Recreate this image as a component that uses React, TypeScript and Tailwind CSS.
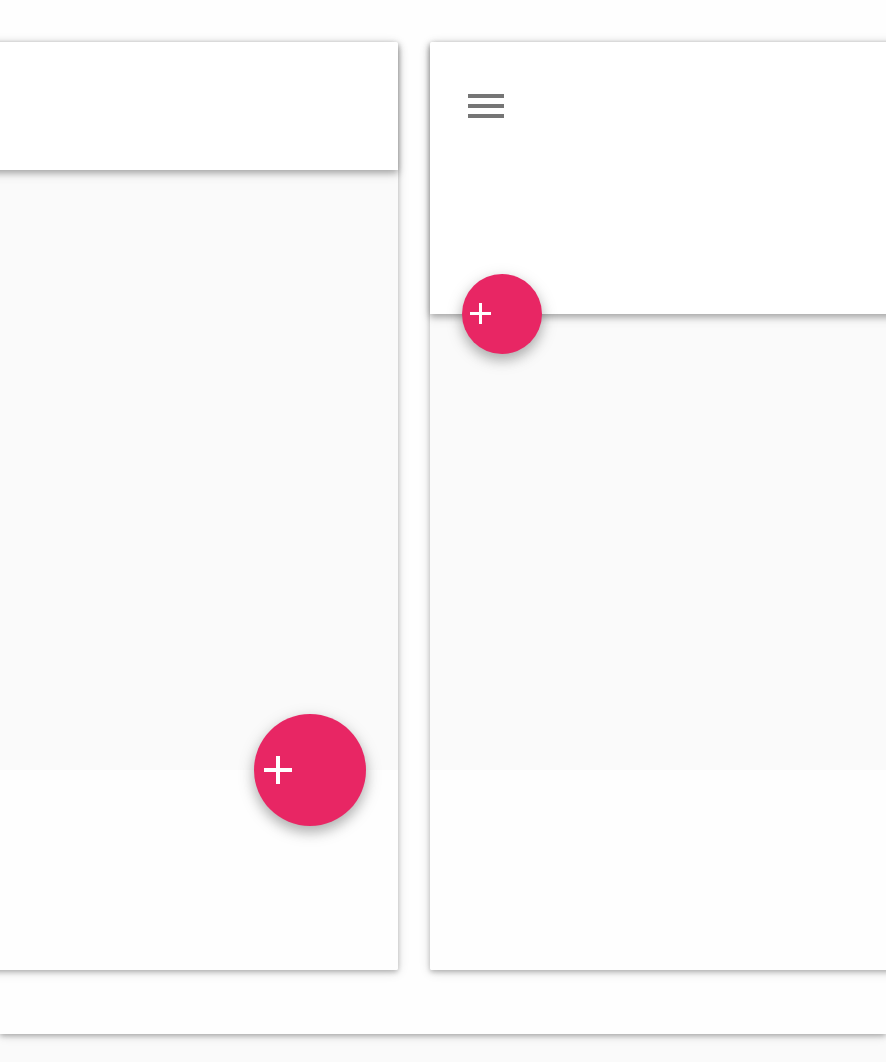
import React from "react";

function Plus({ size, stroke }: { size: number; stroke: number }) {
  return (
    <svg width={size} height={size} viewBox={`0 0 ${size} ${size}`}>
      <rect x={0} y={(size - stroke) / 2} width={size} height={stroke} fill="#ffffff" />
      <rect x={(size - stroke) / 2} y={0} width={stroke} height={size} fill="#ffffff" />
    </svg>
  );
}

export default function App() {
  return (
    <div className="min-h-[1062px] w-full bg-[#fafafa] font-['Roboto',sans-serif]">
      <div className="relative h-[1034px] w-full overflow-hidden bg-[#fefefe] shadow-[0_2px_5px_0_rgba(0,0,0,0.26),0_2px_10px_0_rgba(0,0,0,0.12)]">
        <div className="flex gap-[32px] pt-[42px] ml-[-42px]">
          {/* Left card */}
          <div className="relative flex h-[928px] w-[440px] shrink-0 flex-col rounded-[2px] bg-[#fefefe] shadow-[0_2px_5px_0_rgba(0,0,0,0.24),0_2px_12px_0_rgba(0,0,0,0.14)]">
            <div className="relative z-10 h-[128px] rounded-t-[2px] bg-white shadow-[0_3px_6px_0_rgba(0,0,0,0.26),0_4px_12px_0_rgba(0,0,0,0.12)]" />
            <div className="h-[600px] bg-[#fafafa]" />
            <div className="h-[200px] rounded-b-[2px] bg-[#fefefe]" />
            <button className="absolute bottom-[144px] right-[32px] z-20 flex h-[112px] w-[112px] items-center rounded-full bg-[#e82664] pl-[10px] shadow-[0_6px_12px_0_rgba(0,0,0,0.2),0_5px_18px_0_rgba(0,0,0,0.16)]">
              <Plus size={28} stroke={4} />
            </button>
          </div>
          {/* Right card */}
          <div className="relative flex h-[928px] w-[480px] shrink-0 flex-col rounded-[2px] bg-[#fefefe] shadow-[0_2px_5px_0_rgba(0,0,0,0.24),0_2px_12px_0_rgba(0,0,0,0.14)]">
            <div className="relative z-10 h-[272px] rounded-t-[2px] bg-white pl-[38px] pt-[52px] shadow-[0_3px_6px_0_rgba(0,0,0,0.26),0_4px_12px_0_rgba(0,0,0,0.12)]">
              <div className="flex w-[36px] flex-col gap-[6px]">
                <div className="h-[4px] w-[36px] bg-[#757575]" />
                <div className="h-[4px] w-[36px] bg-[#757575]" />
                <div className="h-[4px] w-[36px] bg-[#757575]" />
              </div>
            </div>
            <div className="h-[456px] bg-[#fafafa]" />
            <div className="h-[200px] rounded-b-[2px] bg-[#fefefe]" />
            <button className="absolute left-[32px] top-[232px] z-20 flex h-[80px] w-[80px] items-center rounded-full bg-[#e82664] pb-[2px] pl-[8px] shadow-[0_6px_12px_0_rgba(0,0,0,0.2),0_5px_18px_0_rgba(0,0,0,0.16)]">
              <Plus size={21} stroke={3} />
            </button>
          </div>
        </div>
      </div>
    </div>
  );
}
